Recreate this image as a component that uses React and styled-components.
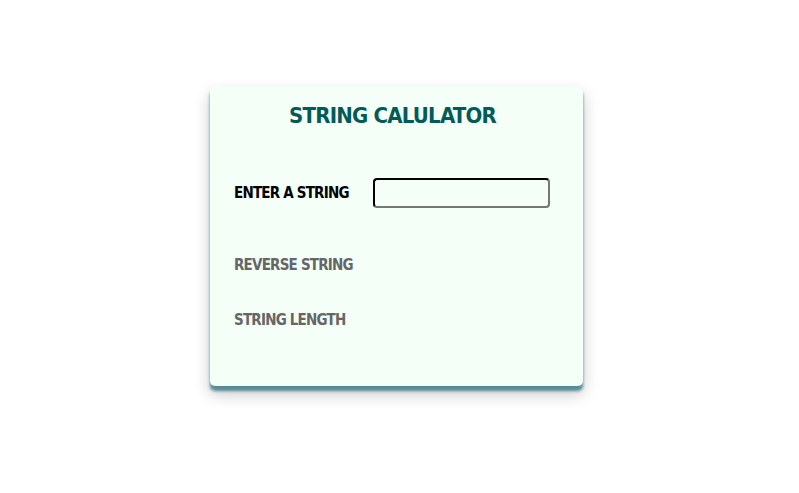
import styled, { createGlobalStyle } from 'styled-components'

const Global = createGlobalStyle`
  body {
    margin: 0;
    background: #ffffff;
    font-family: "DejaVu Sans Condensed", "Liberation Sans", sans-serif;
  }
`

function App() {
  return (
    <Page>
      <Global />
      <Card>
        <Title>STRING CALULATOR</Title>
        <Row>
          <Label>ENTER A STRING</Label>
          <Input type="text" />
        </Row>
        <Result>REVERSE STRING</Result>
        <Result>STRING LENGTH</Result>
      </Card>
    </Page>
  )
}

export default App

const Page = styled.div`
  min-height: 100vh;
  box-sizing: border-box;
  display: flex;
  justify-content: center;
  align-items: flex-start;
  padding: 86px 6px 0 0;
`

const Card = styled.div`
  width: 373px;
  height: 300px;
  box-sizing: border-box;
  background: #f3fff7;
  border-radius: 5px;
  box-shadow: 0 5px 3px rgba(55, 120, 130, 0.8), 0 8px 16px rgba(0, 0, 0, 0.22);
  padding: 16px 24px 0 24px;
  display: flex;
  flex-direction: column;
`

const Title = styled.h1`
  margin: 0;
  padding-right: 8px;
  text-align: center;
  font-size: 22px;
  font-weight: bold;
  letter-spacing: -0.8px;
  color: #035b57;
  line-height: 28px;
`

const Row = styled.div`
  display: flex;
  align-items: center;
  margin-top: 48px;
  gap: 24px;
`

const Label = styled.span`
  font-size: 15px;
  font-weight: bold;
  letter-spacing: -0.8px;
  white-space: nowrap;
  color: #000;
  width: 115px;
`

const Input = styled.input`
  width: 177px;
  height: 30px;
  box-sizing: border-box;
  border: 2px inset #767676;
  border-top-color: #222;
  border-left-color: #222;
  border-radius: 4px;
  background: #f3fff7;
  outline: none;
`

const Result = styled.p`
  margin: 48px 0 0 0;
  font-size: 15px;
  font-weight: bold;
  letter-spacing: -0.8px;
  color: #666;
  line-height: 18px;

  & + & {
    margin-top: 37px;
  }
`
